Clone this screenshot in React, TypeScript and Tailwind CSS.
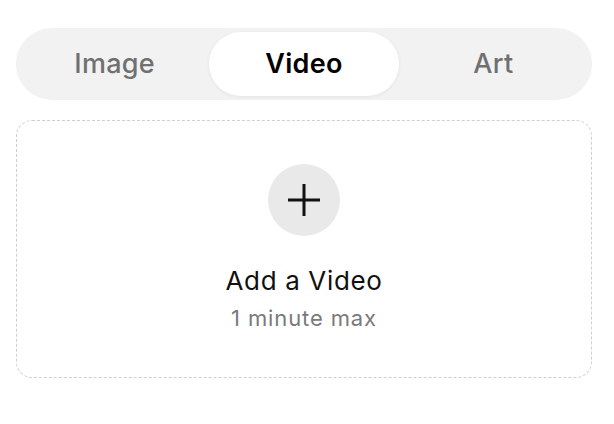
import { useState } from "react";

const tabs = ["Image", "Video", "Art"];

export default function App() {
  const [active, setActive] = useState("Video");

  return (
    <div
      className="min-h-[424px] w-[614px] bg-white pl-4 pt-7"
      style={{ fontFamily: "Inter, 'Liberation Sans', sans-serif" }}
    >
      <div className="w-[576px]">
        <div className="grid h-[72px] grid-cols-3 rounded-full bg-[#f2f2f2] p-1">
          {tabs.map((tab) => {
            const isActive = tab === active;
            return (
              <button
                key={tab}
                type="button"
                onClick={() => setActive(tab)}
                className={`flex items-center justify-center rounded-full pt-px text-[27px] tracking-[0.01em] ${
                  isActive
                    ? "bg-white font-semibold text-black shadow-[0_1px_4px_rgba(0,0,0,0.06)]"
                    : "font-medium text-[#707070]"
                }`}
              >
                {tab}
              </button>
            );
          })}
        </div>

        <div className="mt-5 flex h-[258px] flex-col items-center rounded-2xl border border-dashed border-[#cfcfcf] pt-[43px]">
          <button
            type="button"
            className="flex h-[72px] w-[72px] items-center justify-center rounded-full bg-[#e9e9e9]"
          >
            <svg width="34" height="34" viewBox="0 0 34 34" fill="none">
              <path d="M17 1v32M1 17h32" stroke="#111" strokeWidth="3" />
            </svg>
          </button>
          <p className="mt-[29px] text-[26px] leading-8 tracking-[0.025em] text-[#111]">Add a Video</p>
          <p className="mt-[9px] text-[22px] leading-6 tracking-[0.04em] text-[#7a7a7a]">1 minute max</p>
        </div>
      </div>
    </div>
  );
}
